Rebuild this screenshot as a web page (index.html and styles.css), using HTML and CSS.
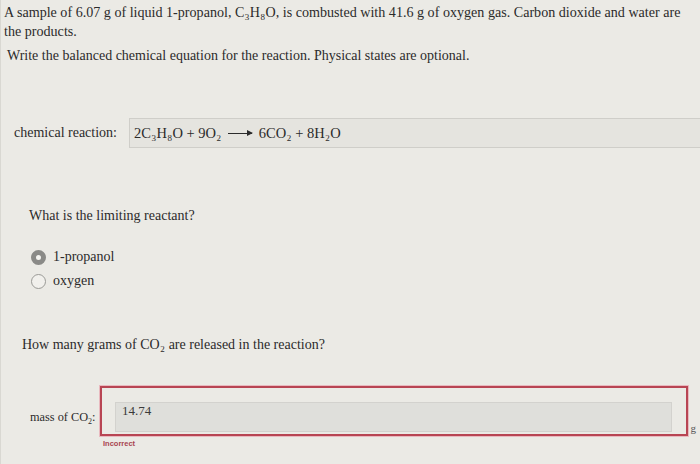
FILE: index.html
```html
<!DOCTYPE html>
<html lang="en">
<head>
  <meta charset="UTF-8">
  <title>Combustion of 1-propanol</title>
  <link rel="stylesheet" href="styles.css">
</head>
<body>

<div class="page">
  <p class="intro">A sample of 6.07 g of liquid 1-propanol, C<sub>3</sub>H<sub>8</sub>O, is combusted with 41.6 g of oxygen gas. Carbon dioxide and water are the products.</p>
  <p class="prompt">Write the balanced chemical equation for the reaction. Physical states are optional.</p>

  <div class="reaction-row">
    <span class="reaction-label">chemical reaction:</span>
    <div class="reaction-box">2C<sub>3</sub>H<sub>8</sub>O + 9O<sub>2</sub> <span class="arrow"></span> 6CO<sub>2</sub> + 8H<sub>2</sub>O</div>
  </div>

  <div class="question">
    <p class="q-limiting">What is the limiting reactant?</p>
    <label class="choice first"><span class="radio checked"></span>1-propanol</label>
    <label class="choice"><span class="radio"></span>oxygen</label>
  </div>

  <div class="question">
    <p class="q-mass">How many grams of CO<sub>2</sub> are released in the reaction?</p>
    <div class="answer-row">
      <span class="mass-label">mass of CO<sub>2</sub>:</span>
      <div class="answer-wrap">
        <div class="answer-box">
          <div class="answer-input">14.74</div>
        </div>
        <span class="incorrect">Incorrect</span>
      </div>
      <span class="unit">g</span>
    </div>
  </div>
</div>

</body>
</html>
```

FILE: styles.css
```css
body {
    margin: 0;
    background: #ebeae5;
    color: #2b2b2b;
    font-family: "Liberation Serif", "Times New Roman", serif;
    font-size: 14px;
}
.page {
    padding: 3px 0 0 3px;
    height: 461px;
    border-left: 1px solid #d9d8d2;
    overflow: hidden;
}
p {
    margin: 0;
}
sub {
    font-size: 9px;
    line-height: 0;
    vertical-align: -3px;
    margin: 0 0.5px;
}
.intro {
    font-size: 14.1px;
    line-height: 19px;
    padding-right: 4px;
}
.prompt {
    margin-top: 7px;
    padding-left: 3px;
}
.reaction-row {
    display: flex;
    align-items: center;
    margin-top: 54px;
}
.reaction-label {
    padding-left: 10px;
    width: 115px;
}
.reaction-box {
    flex: 1;
    height: 30px;
    line-height: 28px;
    box-sizing: border-box;
    padding-left: 4px;
    font-size: 14.5px;
    background: #e5e4df;
    border: 1px solid #cfcec9;
    border-right: none;
}
.arrow {
    display: inline-block;
    position: relative;
    width: 24px;
    height: 1px;
    margin: 0 3px;
    vertical-align: 4px;
    background: #2b2b2b;
}
.arrow::after {
    content: "";
    position: absolute;
    right: -1px;
    top: -3px;
    border-left: 6px solid #2b2b2b;
    border-top: 3.5px solid transparent;
    border-bottom: 3.5px solid transparent;
}
.question {
    padding-left: 25px;
}
.q-limiting {
    margin-top: 60px;
}
.choice {
    display: flex;
    align-items: center;
    gap: 7px;
    padding-left: 2px;
    height: 24px;
}
.choice.first {
    margin-top: 21px;
}
.radio {
    width: 13px;
    height: 13px;
    border-radius: 50%;
    border: 1px solid #9a9a96;
    background: #f1f0ec;
}
.radio.checked {
    width: 5px;
    height: 5px;
    border: 5px solid #8a8a87;
    background: #f4f4f0;
}
.q-mass {
    margin-top: 44px;
    margin-left: -7px;
}
.answer-row {
    display: flex;
    align-items: flex-start;
    margin-top: 33px;
}
.mass-label {
    flex-shrink: 0;
    white-space: nowrap;
    margin-top: 24px;
    width: 70px;
    margin-left: 1px;
    font-size: 12.3px;
}
.mass-label sub {
    font-size: 8px;
    margin: 0;
}
.answer-wrap {
    flex: 1;
    display: flex;
    flex-direction: column;
}
.answer-box {
    height: 50px;
    box-sizing: border-box;
    border: 2px solid #b84553;
    box-shadow: 0 0 0 1px #e9b9bf;
    padding: 14px 14px 0 13px;
}
.answer-input {
    height: 30px;
    box-sizing: border-box;
    background: #dfdfdb;
    border: 1px solid #d3d2ce;
    padding: 0 0 0 6px;
    font-size: 13px;
    color: #3a3a3a;
}
.incorrect {
    font-family: "Liberation Sans", Arial, sans-serif;
    font-size: 7.5px;
    font-weight: bold;
    color: #a8454f;
    margin-top: 3px;
    padding-left: 3px;
}
.unit {
    flex-shrink: 0;
    margin-top: 36px;
    padding: 0 4px 0 3px;
    font-size: 11px;
    color: #555;
}
```
